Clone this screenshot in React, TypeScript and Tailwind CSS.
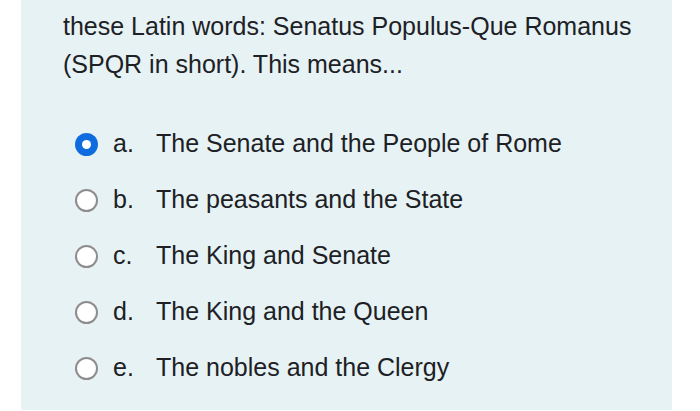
const options = [
  { letter: "a.", text: "The Senate and the People of Rome", checked: true },
  { letter: "b.", text: "The peasants and the State", checked: false },
  { letter: "c.", text: "The King and Senate", checked: false },
  { letter: "d.", text: "The King and the Queen", checked: false },
  { letter: "e.", text: "The nobles and the Clergy", checked: false },
];

function Radio({ checked }: { checked: boolean }) {
  if (checked) {
    return (
      <span className="flex h-[23px] w-[23px] shrink-0 items-center justify-center rounded-full bg-[#0f6cde]">
        <span className="h-[9px] w-[9px] rounded-full bg-white" />
      </span>
    );
  }
  return (
    <span className="h-[23px] w-[23px] shrink-0 rounded-full border-2 border-[#8d8d8d] bg-white" />
  );
}

export default function App() {
  return (
    <div className="h-[411px] w-[700px] overflow-hidden bg-white font-['Liberation_Sans',Arial,sans-serif] text-[#1d2125]">
      <div className="ml-[21px] flex h-[410px] w-[651px] flex-col bg-[#e6f2f4] pl-[42px] pr-4">
        <p className="mt-[-31px] text-[25px] leading-[38px]">
          <span className="invisible">x</span>
          <br />
          these Latin words: Senatus Populus-Que Romanus
          <br />
          (SPQR in short). This means...
        </p>
        <div className="mt-[33px] flex flex-col pl-[12px]">
          {options.map((o) => (
            <div key={o.letter} className="flex h-[56px] items-center">
              <Radio checked={o.checked} />
              <span className="ml-[15px] w-[43px] text-[25px]">{o.letter}</span>
              <span className="text-[25px]">{o.text}</span>
            </div>
          ))}
        </div>
      </div>
    </div>
  );
}
